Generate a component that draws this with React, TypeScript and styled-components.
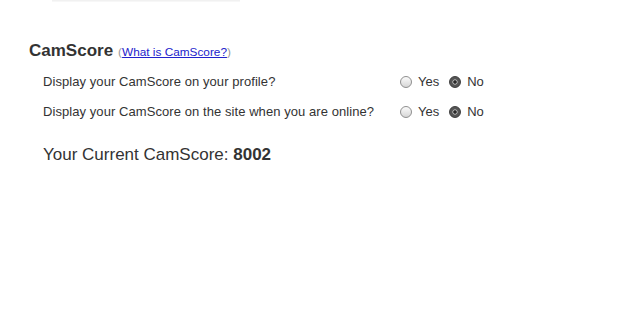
import React from "react";
import styled, { createGlobalStyle } from "styled-components";

const GlobalStyle = createGlobalStyle`
  body {
    margin: 0;
    background: #fff;
    font-family: "Liberation Sans", Arial, Helvetica, sans-serif;
    color: #333;
  }
`;

const Page = styled.div`
  width: 638px;
  height: 330px;
  overflow: hidden;
`;

// bottom edge of the box that sits above this section
const TopEdge = styled.div`
  margin-left: 52px;
  width: 188px;
  height: 2px;
  background: linear-gradient(#eeeeee, #fafafa);
`;

const Section = styled.section`
  padding: 39px 0 0 29px;
`;

const Heading = styled.h2`
  margin: 0;
  display: flex;
  align-items: baseline;
  gap: 5px;
  font-size: 17px;
  font-weight: bold;
  color: #333;
`;

const HelpLink = styled.a`
  font-size: 11.8px;
  font-weight: normal;
  color: #999;
  span {
    color: #2222cc;
    text-decoration: underline;
  }
`;

const Options = styled.div`
  margin-top: 11px;
  padding-left: 14px;
  display: flex;
  flex-direction: column;
  gap: 11px;
`;

const Row = styled.div`
  display: flex;
  align-items: center;
  height: 19px;
  font-size: 13px;
  color: #333;
`;

const Question = styled.div`
  width: 357px;
  letter-spacing: 0.07px;
`;

const Choice = styled.label`
  display: flex;
  align-items: center;
  gap: 6px;
  margin-right: 10px;
  font-size: 13px;
`;

const Radio = styled.span<{ $checked?: boolean }>`
  width: 12px;
  height: 12px;
  box-sizing: border-box;
  border-radius: 50%;
  border: 1px solid ${(p) => (p.$checked ? "#3c3c3c" : "#8f8f8f")};
  background: ${(p) =>
    p.$checked
      ? "radial-gradient(circle, #2a2a2a 0 1.4px, #a8a8a8 1.9px 2.4px, #555 3px)"
      : "linear-gradient(#fbfbfb, #d6d6d6)"};
`;

const Score = styled.div`
  margin-top: 24px;
  padding-left: 14px;
  font-size: 17px;
  color: #333;
  b {
    font-weight: bold;
  }
`;

function YesNo({ value }: { value: boolean }) {
  return (
    <>
      <Choice>
        <Radio $checked={value} />
        Yes
      </Choice>
      <Choice>
        <Radio $checked={!value} />
        No
      </Choice>
    </>
  );
}

export default function App() {
  return (
    <Page>
      <GlobalStyle />
      <TopEdge />
      <Section>
        <Heading>
          CamScore
          <HelpLink>
            (<span>What is CamScore?</span>)
          </HelpLink>
        </Heading>
        <Options>
          <Row>
            <Question>Display your CamScore on your profile?</Question>
            <YesNo value={false} />
          </Row>
          <Row>
            <Question>Display your CamScore on the site when you are online?</Question>
            <YesNo value={false} />
          </Row>
        </Options>
        <Score>
          Your Current CamScore: <b>8002</b>
        </Score>
      </Section>
    </Page>
  );
}
